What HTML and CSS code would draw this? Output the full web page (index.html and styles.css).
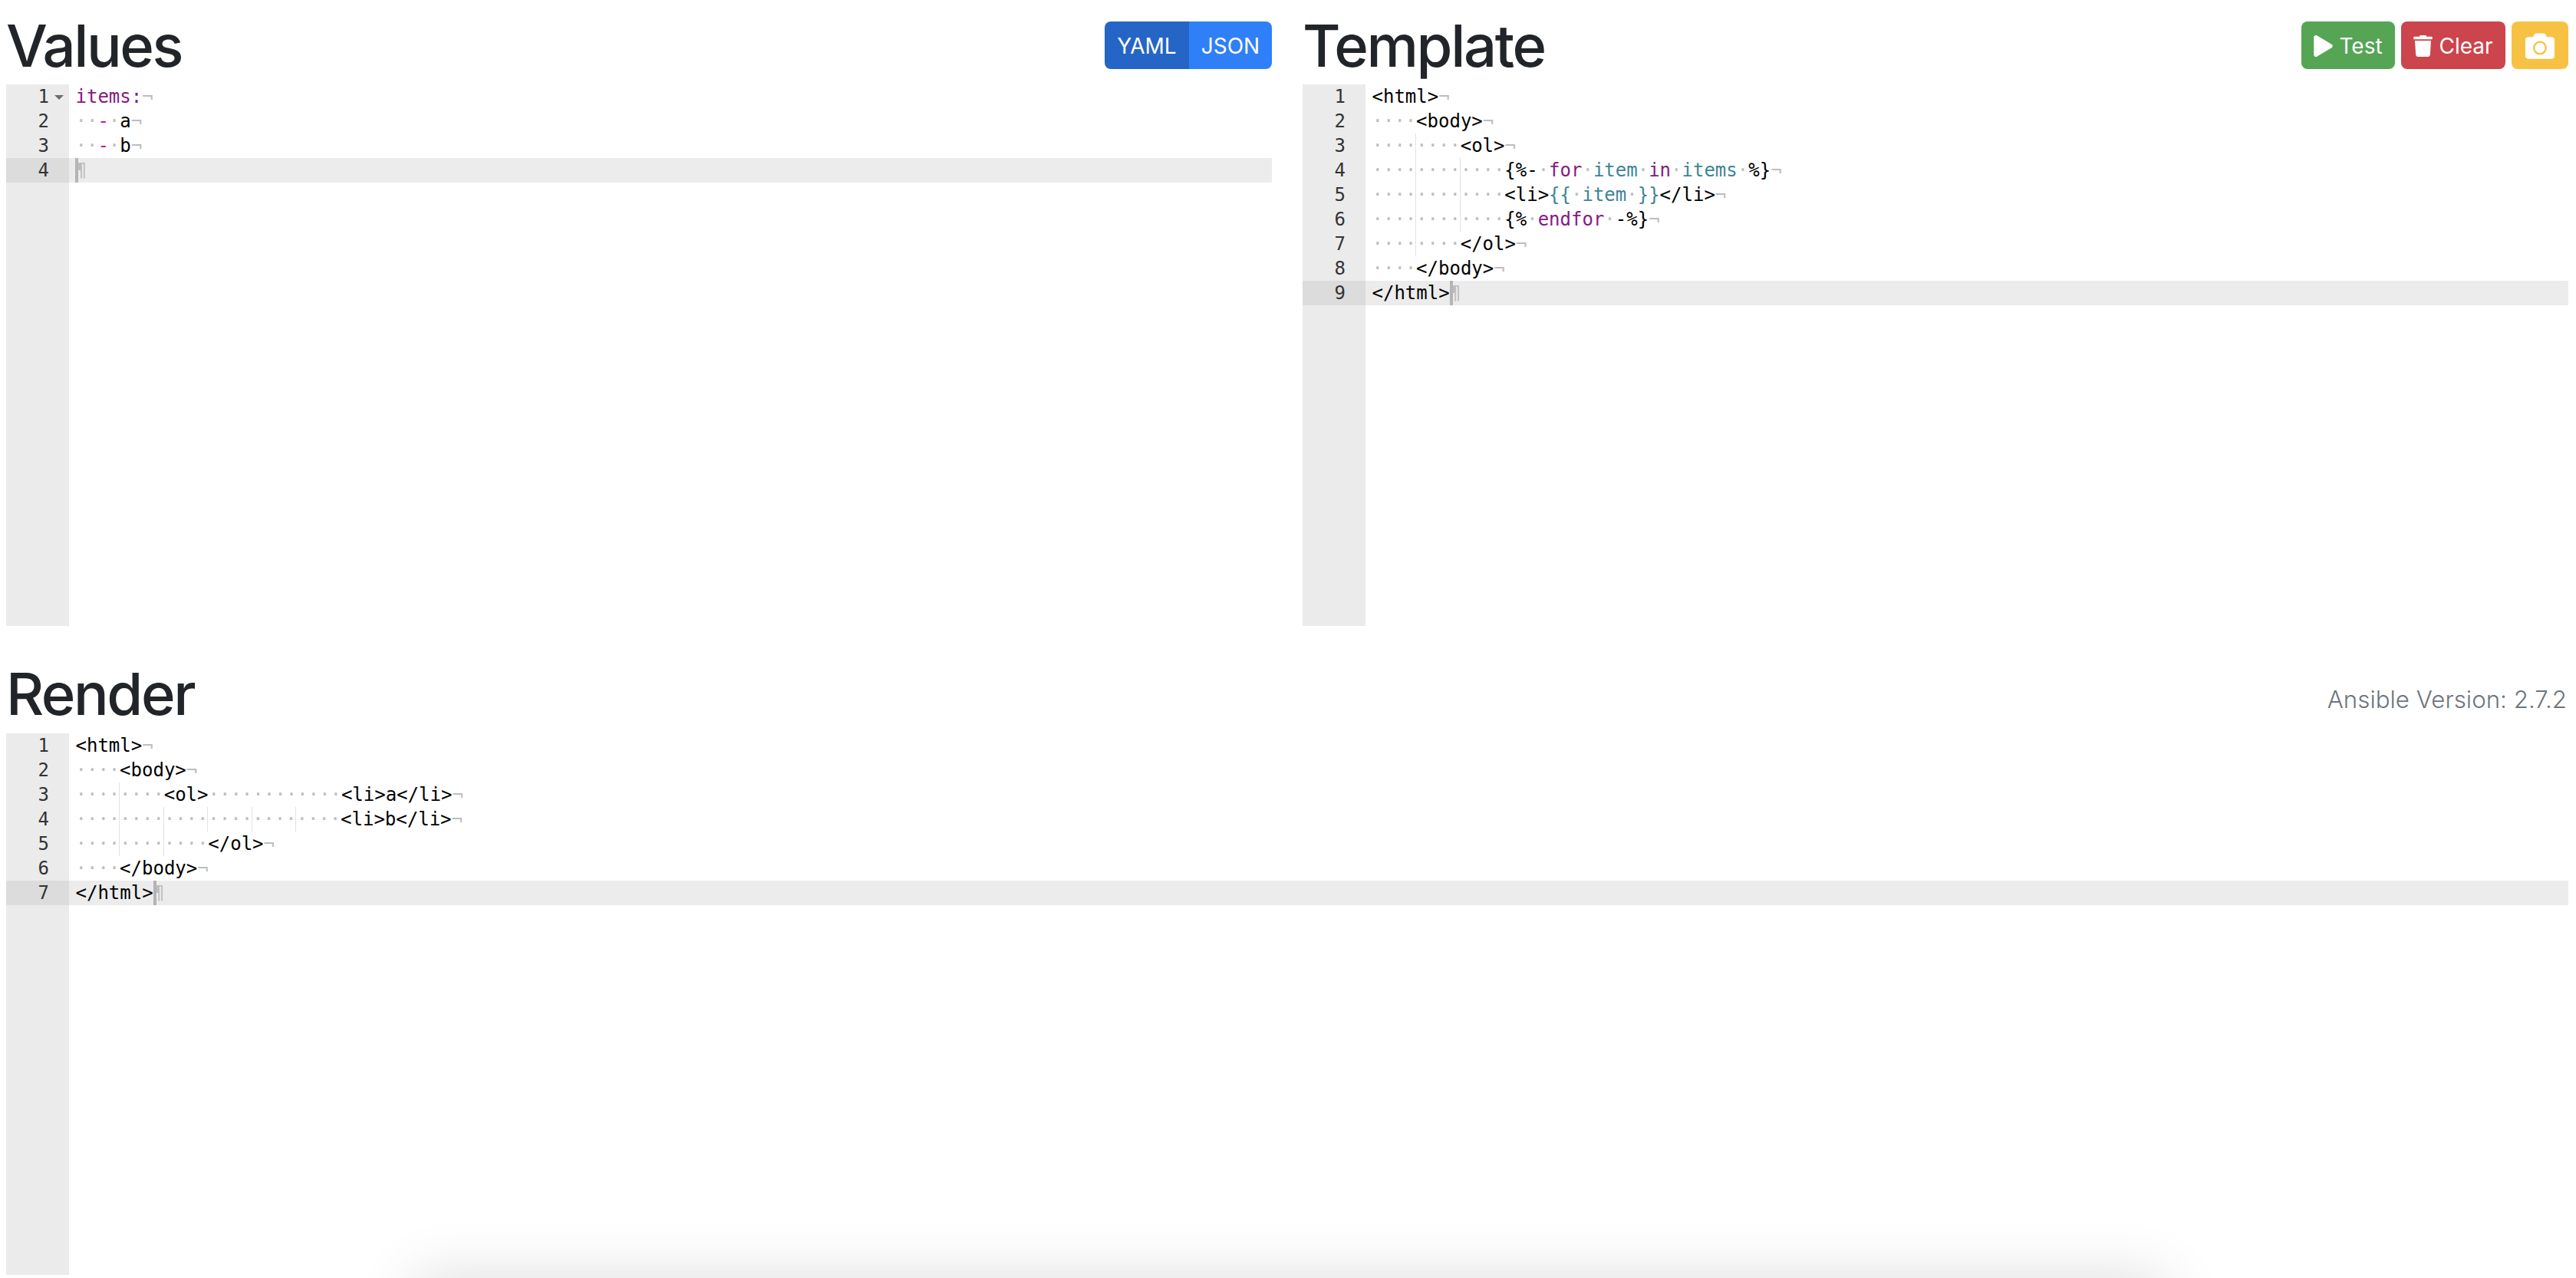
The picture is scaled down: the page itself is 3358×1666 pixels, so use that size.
FILE: index.html
```html
<!DOCTYPE html>
<html lang="en">
<head>
<meta charset="utf-8">
<title>Ansible Template Tester</title>
<link rel="stylesheet" href="styles.css">
</head>
<body>
<main class="page">
  <section class="pane">
    <header class="pane-head">
      <h1 class="title">Values</h1>
      <div class="btn-group">
        <button class="btn btn-blue-active">YAML</button>
        <button class="btn btn-blue">JSON</button>
      </div>
    </header>
    <div class="editor">
      <div class="gutter">
        <div class="gl has-fold">1<span class="fold"></span></div>
        <div class="gl">2</div>
        <div class="gl">3</div>
        <div class="gl gl-active">4</div>
      </div>
      <div class="code">
        <div class="line"><span class="kw">items:</span><span class="inv">¬</span></div>
        <div class="line"><span class="inv">··</span><span class="dash">-</span><span class="inv">·</span>a<span class="inv">¬</span></div>
        <div class="line"><span class="inv">··</span><span class="dash">-</span><span class="inv">·</span>b<span class="inv">¬</span></div>
        <div class="line line-active"><span class="cursor"></span><span class="inv">¶</span></div>
      </div>
    </div>
  </section>

  <section class="pane">
    <header class="pane-head">
      <h1 class="title">Template</h1>
      <div class="actions">
        <button class="btn btn-green"><svg class="icon icon-play" viewBox="0 0 448 512"><path d="M424.4 214.7L72.4 6.6C43.8-10.3 0 6.1 0 47.9V464c0 37.5 40.7 60.1 72.4 41.3l352-208c31.4-18.5 31.5-64.1 0-82.6z"/></svg>Test</button>
        <button class="btn btn-red"><svg class="icon icon-trash" viewBox="0 0 448 512"><path d="M432 32H312l-9.4-18.7A24 24 0 0 0 281.1 0H166.8a23.72 23.72 0 0 0-21.4 13.3L136 32H16A16 16 0 0 0 0 48v32a16 16 0 0 0 16 16h416a16 16 0 0 0 16-16V48a16 16 0 0 0-16-16zM53.2 467a48 48 0 0 0 47.9 45h245.8a48 48 0 0 0 47.9-45L416 128H32z"/></svg>Clear</button>
        <button class="btn btn-yellow" aria-label="Screenshot"><svg class="icon icon-camera" viewBox="0 0 512 512"><path d="M512 144v288c0 26.5-21.5 48-48 48H48c-26.5 0-48-21.5-48-48V144c0-26.5 21.5-48 48-48h88l12.3-32.9c7-18.7 24.9-31.1 44.9-31.1h125.5c20 0 37.9 12.4 44.9 31.1L376 96h88c26.5 0 48 21.5 48 48zM376 288c0-66.2-53.8-120-120-120s-120 53.8-120 120 53.8 120 120 120 120-53.8 120-120zm-32 0c0 48.5-39.5 88-88 88s-88-39.5-88-88 39.5-88 88-88 88 39.5 88 88z"/></svg></button>
      </div>
    </header>
    <div class="editor">
      <div class="gutter">
        <div class="gl">1</div><div class="gl">2</div><div class="gl">3</div><div class="gl">4</div><div class="gl">5</div><div class="gl">6</div><div class="gl">7</div><div class="gl">8</div><div class="gl gl-active">9</div>
      </div>
      <div class="code">
        <div class="line">&lt;html&gt;<span class="inv">¬</span></div>
        <div class="line"><span class="ind">····</span>&lt;body&gt;<span class="inv">¬</span></div>
        <div class="line"><span class="ind guide">····</span><span class="ind">····</span>&lt;ol&gt;<span class="inv">¬</span></div>
        <div class="line"><span class="ind guide">····</span><span class="ind guide">····</span><span class="ind">····</span>{%-<span class="inv">·</span><span class="kw">for</span><span class="inv">·</span><span class="var">item</span><span class="inv">·</span><span class="kw">in</span><span class="inv">·</span><span class="var">items</span><span class="inv">·</span>%}<span class="inv">¬</span></div>
        <div class="line"><span class="ind guide">····</span><span class="ind guide">····</span><span class="ind">····</span>&lt;li&gt;<span class="var">{{</span><span class="inv">·</span><span class="var">item</span><span class="inv">·</span><span class="var">}}</span>&lt;/li&gt;<span class="inv">¬</span></div>
        <div class="line"><span class="ind guide">····</span><span class="ind guide">····</span><span class="ind">····</span>{%<span class="inv">·</span><span class="kw">endfor</span><span class="inv">·</span>-%}<span class="inv">¬</span></div>
        <div class="line"><span class="ind guide">····</span><span class="ind">····</span>&lt;/ol&gt;<span class="inv">¬</span></div>
        <div class="line"><span class="ind">····</span>&lt;/body&gt;<span class="inv">¬</span></div>
        <div class="line line-active">&lt;/html&gt;<span class="cursor-wrap"><span class="cursor"></span><span class="inv">¶</span></span></div>
      </div>
    </div>
  </section>

  <section class="pane pane-wide">
    <header class="pane-head pane-head-render">
      <h1 class="title">Render</h1>
      <small class="version">Ansible Version: 2.7.2</small>
    </header>
    <div class="editor">
      <div class="gutter">
        <div class="gl">1</div><div class="gl">2</div><div class="gl">3</div><div class="gl">4</div><div class="gl">5</div><div class="gl">6</div><div class="gl gl-active">7</div>
      </div>
      <div class="code">
        <div class="line">&lt;html&gt;<span class="inv">¬</span></div>
        <div class="line"><span class="ind">····</span>&lt;body&gt;<span class="inv">¬</span></div>
        <div class="line"><span class="ind guide">····</span><span class="ind">····</span>&lt;ol&gt;<span class="inv">············</span>&lt;li&gt;a&lt;/li&gt;<span class="inv">¬</span></div>
        <div class="line"><span class="ind guide">····</span><span class="ind guide">····</span><span class="ind guide">····</span><span class="ind guide">····</span><span class="ind guide">····</span><span class="ind">····</span>&lt;li&gt;b&lt;/li&gt;<span class="inv">¬</span></div>
        <div class="line"><span class="ind guide">····</span><span class="ind guide">····</span><span class="ind">····</span>&lt;/ol&gt;<span class="inv">¬</span></div>
        <div class="line"><span class="ind">····</span>&lt;/body&gt;<span class="inv">¬</span></div>
        <div class="line line-active">&lt;/html&gt;<span class="cursor-wrap"><span class="cursor"></span><span class="inv">¶</span></span></div>
      </div>
    </div>
  </section>
</main>
<div class="offscreen-sheet"></div>
</body>
</html>
```
FILE: styles.css
```css
* { box-sizing: border-box; }
html, body { margin: 0; height: 100%; overflow: hidden; background: #fff; }
body { font-family: Inter, "Liberation Sans", sans-serif; color: #212529; }

.page {
  display: grid;
  grid-template-columns: 1650px 1650px;
  column-gap: 40px;
  padding: 0 10px 0 8px;
}
.pane-wide { grid-column: 1 / -1; }

.pane-head {
  display: flex;
  justify-content: space-between;
  align-items: flex-start;
  height: 110px;
}
.pane-head-render { height: 140px; padding-top: 32px; }

.title {
  margin: 0;
  font-size: 76px;
  font-weight: 500;
  line-height: 118px;
  letter-spacing: -2.4px;
}
.pane-head-render .title { line-height: 112px; }

.version {
  font-size: 31.3px;
  font-weight: 300;
  color: #6c757d;
  line-height: 40px;
  margin-top: 44px;
  margin-right: 2px;
}

.btn-group { display: flex; margin-top: 28px; }
.btn-group .btn:first-child { border-radius: 8px 0 0 8px; }
.btn-group .btn:last-child { border-radius: 0 8px 8px 0; }
.actions { display: flex; gap: 8px; margin-top: 28px; }

.btn {
  display: flex;
  align-items: center;
  justify-content: center;
  height: 62px;
  border: 0;
  border-radius: 8px;
  padding: 2px 0 0;
  font-family: inherit;
  font-size: 28px;
  color: #fff;
}
.btn-blue-active { background: #2565c6; width: 110px; }
.btn-blue { background: #2f7ff8; width: 108px; }
.btn-green { background: #55a555; width: 122px; }
.btn-red { background: #cc444c; width: 136px; }
.btn-yellow { background: #f7c244; width: 74px; }

.icon { fill: #fff; display: block; }
.icon-play { width: 25px; height: 28px; margin-right: 8px; }
.icon-trash { width: 25px; height: 28px; margin-right: 8px; }
.icon-camera { width: 38px; height: 38px; }

.editor {
  display: flex;
  height: 706px;
  font-family: "DejaVu Sans Mono", monospace;
  font-size: 24px;
  line-height: 32px;
  color: #000;
  background: #fff;
}

.gutter {
  flex: 0 0 82px;
  background: #ebebeb;
  color: #333;
}
.gl {
  position: relative;
  height: 32px;
  padding-right: 26px;
  text-align: right;
}
.gl-active { background: #dcdcdc; }
.fold {
  position: absolute;
  left: 63px;
  top: 14px;
  border-left: 6px solid transparent;
  border-right: 6px solid transparent;
  border-top: 6px solid #6e6e6e;
}

.code { flex: 1; min-width: 0; }
.line {
  position: relative;
  height: 32px;
  padding-left: 8.5px;
  white-space: pre;
}
.line-active { background: #ececec; }

.inv { color: #bdbdbd; }
.ind {
  display: inline-block;
  width: 57.6px;
  height: 32px;
  vertical-align: top;
  color: #bdbdbd;
}
.guide { box-shadow: inset -1px 0 0 #e2e2e2; }
.kw { color: #88197f; }
.dash { color: #c2169e; }
.var { color: #3d8596; }

.cursor-wrap { position: relative; display: inline-block; height: 32px; vertical-align: top; }
.cursor {
  position: absolute;
  left: 0;
  top: 0;
  width: 4px;
  height: 32px;
  background: #b4b4b4;
}
.line-active > .cursor { left: 8px; }

.offscreen-sheet {
  position: fixed;
  left: 540px;
  top: 1666px;
  width: 2280px;
  height: 200px;
  box-shadow: 0 0 80px rgba(0, 0, 0, 0.14);
}
```
